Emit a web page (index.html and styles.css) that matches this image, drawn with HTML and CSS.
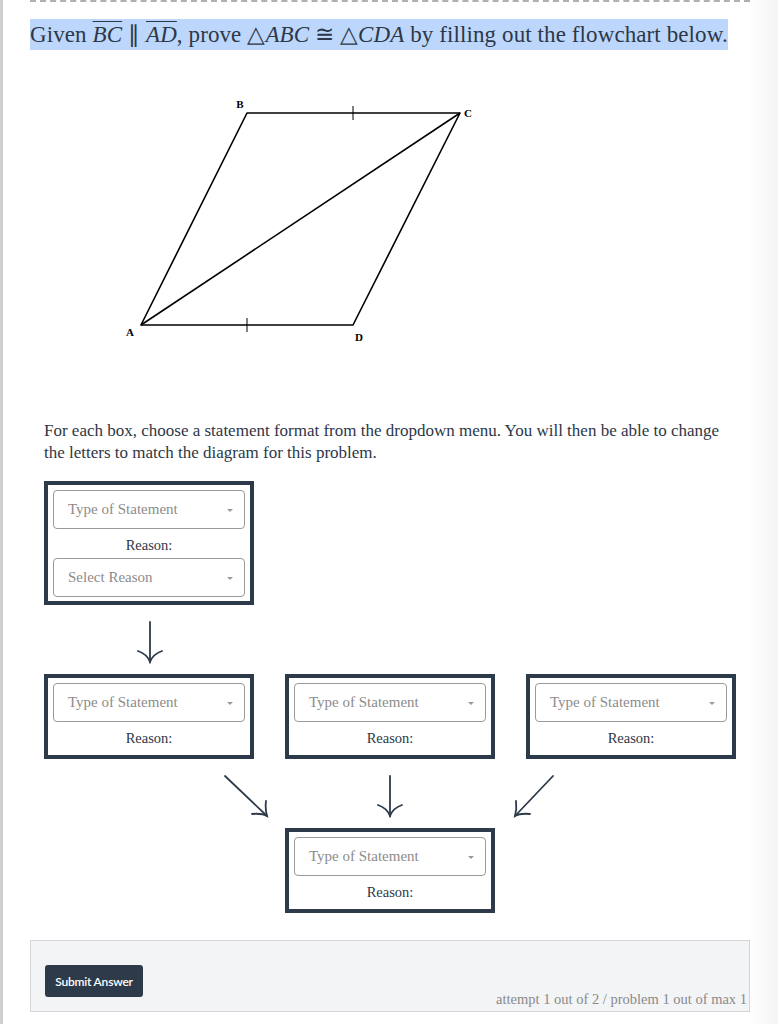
FILE: index.html
```html
<!DOCTYPE html>
<html>
<head>
<meta charset="utf-8">
<link rel="stylesheet" href="styles.css">
</head>
<body>
<div class="page">
  <div class="content">
    <h1 class="title"><span class="hl">Given <span class="m ov">BC</span> <span class="mr">∥</span> <span class="m ov">AD</span>, prove <span class="mr">△</span><span class="m">ABC</span> <span class="mr">≅</span> <span class="mr">△</span><span class="m">CDA</span> by filling out the flowchart below.</span></h1>

    <svg class="diagram" width="720" height="340" viewBox="0 0 720 340">
      <g stroke="#000" stroke-width="1.6" fill="none" stroke-linejoin="round">
        <polygon points="111,265 217,53 430,53 323,265"/>
        <line x1="111" y1="265" x2="430" y2="53"/>
        <line x1="323" y1="46" x2="323" y2="60" stroke-width="1"/>
        <line x1="217" y1="258" x2="217" y2="272" stroke-width="1"/>
      </g>
      <g font-family="Liberation Serif, serif" font-size="11" font-weight="bold" fill="#000" text-anchor="middle">
        <text x="210" y="48">B</text>
        <text x="438" y="57">C</text>
        <text x="100" y="276">A</text>
        <text x="329" y="281">D</text>
      </g>
    </svg>

    <p class="instr">For each box, choose a statement format from the dropdown menu. You will then be able to change the letters to match the diagram for this problem.</p>

    <div class="flow">
      <div class="grid">
        <div class="box c1">
          <div class="sel">Type of Statement<span class="caret"></span></div>
          <div class="reason">Reason:</div>
          <div class="sel">Select Reason<span class="caret"></span></div>
        </div>
      </div>

      <svg class="arrows" width="692" height="69" viewBox="0 0 692 69">
        <g stroke="#2d3a4a" stroke-width="1.8" fill="none" stroke-linecap="round">
          <line x1="106" y1="17" x2="106" y2="57"/>
          <path d="M94 46 Q103 49 106 57 Q109 49 118 46"/>
        </g>
      </svg>

      <div class="grid">
        <div class="box">
          <div class="sel">Type of Statement<span class="caret"></span></div>
          <div class="reason">Reason:</div>
        </div>
        <div class="box">
          <div class="sel">Type of Statement<span class="caret"></span></div>
          <div class="reason">Reason:</div>
        </div>
        <div class="box">
          <div class="sel">Type of Statement<span class="caret"></span></div>
          <div class="reason">Reason:</div>
        </div>
      </div>

      <svg class="arrows" width="692" height="69" viewBox="0 0 692 69">
        <g stroke="#2d3a4a" stroke-width="1.8" fill="none" stroke-linecap="round">
          <line x1="181" y1="17" x2="223" y2="57"/>
          <path d="M208 55 Q218 54 223 57 Q221 50 222 42"/>
          <line x1="346" y1="17" x2="346" y2="57"/>
          <path d="M334 46 Q343 49 346 57 Q349 49 358 46"/>
          <line x1="509" y1="17" x2="471" y2="57"/>
          <path d="M486 55 Q476 54 471 57 Q473 50 472 42"/>
        </g>
      </svg>

      <div class="grid">
        <div class="box c2">
          <div class="sel">Type of Statement<span class="caret"></span></div>
          <div class="reason">Reason:</div>
        </div>
      </div>
    </div>

    <div class="footer">
      <button class="submit">Submit Answer</button>
      <span class="attempt">attempt 1 out of 2 / problem 1 out of max 1</span>
    </div>
  </div>
</div>
</body>
</html>
```

FILE: styles.css
```css
html, body {
  margin: 0;
  padding: 0;
}
body {
  width: 778px;
  height: 1024px;
  overflow: hidden;
  background: linear-gradient(to right, #cfcfcf 0, #cfcfcf 3px, #ffffff 3px, #ffffff 748px, #f4f4f4 778px);
  font-family: "Liberation Serif", Georgia, serif;
  color: #2d3748;
}
.page {
  padding-left: 30px;
}
.content {
  width: 720px;
  border-top: 2px dashed #b0b0b0;
}
.title {
  margin: 17px 0 0 0;
  font-size: 23px;
  font-weight: normal;
  line-height: 31px;
  height: 31px;
  white-space: nowrap;
  letter-spacing: 0.1px;
}
.hl {
  background: #bcd7fb;
  padding: 3px 0 3px 0;
}
.m {
  font-style: italic;
}
.mr {
  font-style: normal;
}
.ov {
  text-decoration: overline;
  text-decoration-thickness: 1px;
}
.diagram {
  display: block;
  margin-top: 10px;
}
.instr {
  margin: 20px 0 0 14px;
  font-size: 17px;
  line-height: 22px;
  width: 690px;
}
.flow {
  margin: 17px 0 0 14px;
  width: 692px;
}
.grid {
  display: grid;
  grid-template-columns: 210px 210px 210px;
  column-gap: 31px;
}
.arrows {
  display: block;
}
.box {
  border: 4px solid #2d3a4a;
  padding: 5px 5px 4px 5px;
  background: #fff;
}
.c1 { grid-column: 1; }
.c2 { grid-column: 2; }
.sel {
  position: relative;
  height: 39px;
  box-sizing: border-box;
  border: 1px solid #9a9a9a;
  border-radius: 4px;
  padding-left: 14px;
  font-size: 15px;
  line-height: 37px;
  color: #8c8c8c;
}
.caret {
  position: absolute;
  right: 11px;
  top: 18px;
  width: 0;
  height: 0;
  border-left: 3px solid transparent;
  border-right: 3px solid transparent;
  border-top: 3px solid #999;
}
.reason {
  margin-top: 4px;
  height: 25px;
  line-height: 25px;
  text-align: center;
  font-size: 14.5px;
  color: #2d3748;
}
.footer {
  margin-top: 27px;
  height: 72px;
  box-sizing: border-box;
  border: 1px solid #d3d5d9;
  background: #f3f4f6;
  position: relative;
  padding: 24px 0 0 14px;
}
.submit {
  display: block;
  height: 32px;
  width: 98px;
  padding: 0;
  border: none;
  border-radius: 3px;
  background: #2d3a4a;
  color: #fff;
  font-family: Lato, "Liberation Sans", sans-serif;
  font-weight: 600;
  font-size: 12px;
  letter-spacing: -0.2px;
}
.attempt {
  position: absolute;
  right: 2px;
  bottom: 3px;
  font-size: 14.5px;
  color: #8a8a8a;
}
```
